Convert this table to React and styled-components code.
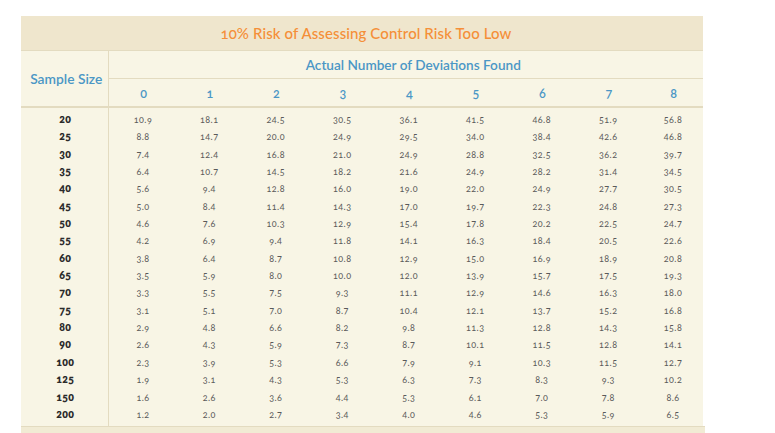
import React from "react";
import styled, { createGlobalStyle } from "styled-components";

const GlobalStyle = createGlobalStyle`
  body {
    margin: 0;
    background: #ffffff;
    font-family: Lato, "Open Sans", sans-serif;
  }
`;

const Page = styled.div`
  padding: 16px 0 0 21px;
  height: 433px;
  box-sizing: border-box;
  overflow: hidden;
`;

const Table = styled.table`
  width: 682px;
  table-layout: fixed;
  border-collapse: collapse;
  background: #f8f5e5;
  font-variant-numeric: oldstyle-nums;
`;

const Title = styled.th`
  height: 34px;
  padding: 0 0 0 8px;
  background: #efe6cd;
  border-bottom: 1px solid #e3dbc0;
  color: #f58f38;
  font-size: 15px;
  font-weight: 500;
  letter-spacing: 0.1px;
  text-align: center;
`;

const SampleHead = styled.th`
  padding: 0 0 0 4px;
  border-right: 1px solid #e3dbc0;
  border-bottom: 2px solid #e3dbc0;
  color: #4b97c5;
  font-size: 13.8px;
  font-weight: 600;
  text-align: center;
`;

const GroupHead = styled.th`
  height: 27px;
  padding: 0 0 0 15px;
  border-bottom: 1px solid #e3dbc0;
  color: #4b97c5;
  font-size: 13.6px;
  font-weight: 600;
  text-align: center;
`;

const DigitHead = styled.th`
  height: 25px;
  padding: 2px 0 0 4px;
  border-bottom: 2px solid #e3dbc0;
  color: #4b97c5;
  font-size: 12.5px;
  font-weight: 600;
  text-align: center;
`;

const Row = styled.tr`
  & > td {
    padding-top: ${({ $first }) => ($first ? "3px" : "0")};
    padding-bottom: ${({ $last }) => ($last ? "3px" : "0")};
  }
`;

const SizeCell = styled.td`
  border-right: 1px solid #e3dbc0;
  line-height: 17.35px;
  color: #2b2b2b;
  font-size: 10.5px;
  font-weight: 800;
  letter-spacing: 0.4px;
  text-align: center;
  padding-left: 3px;
`;

const ValueCell = styled.td`
  line-height: 17.35px;
  padding-left: 4px;
  color: #5a5a5a;
  font-size: 9px;
  letter-spacing: 0.4px;
  text-align: center;
`;

const FooterBand = styled.div`
  width: 684px;
  height: 8px;
  background: #f1ebd4;
  border-top: 1px solid #e3dbc0;
`;

const rows = [
  ["20", "10.9", "18.1", "24.5", "30.5", "36.1", "41.5", "46.8", "51.9", "56.8"],
  ["25", "8.8", "14.7", "20.0", "24.9", "29.5", "34.0", "38.4", "42.6", "46.8"],
  ["30", "7.4", "12.4", "16.8", "21.0", "24.9", "28.8", "32.5", "36.2", "39.7"],
  ["35", "6.4", "10.7", "14.5", "18.2", "21.6", "24.9", "28.2", "31.4", "34.5"],
  ["40", "5.6", "9.4", "12.8", "16.0", "19.0", "22.0", "24.9", "27.7", "30.5"],
  ["45", "5.0", "8.4", "11.4", "14.3", "17.0", "19.7", "22.3", "24.8", "27.3"],
  ["50", "4.6", "7.6", "10.3", "12.9", "15.4", "17.8", "20.2", "22.5", "24.7"],
  ["55", "4.2", "6.9", "9.4", "11.8", "14.1", "16.3", "18.4", "20.5", "22.6"],
  ["60", "3.8", "6.4", "8.7", "10.8", "12.9", "15.0", "16.9", "18.9", "20.8"],
  ["65", "3.5", "5.9", "8.0", "10.0", "12.0", "13.9", "15.7", "17.5", "19.3"],
  ["70", "3.3", "5.5", "7.5", "9.3", "11.1", "12.9", "14.6", "16.3", "18.0"],
  ["75", "3.1", "5.1", "7.0", "8.7", "10.4", "12.1", "13.7", "15.2", "16.8"],
  ["80", "2.9", "4.8", "6.6", "8.2", "9.8", "11.3", "12.8", "14.3", "15.8"],
  ["90", "2.6", "4.3", "5.9", "7.3", "8.7", "10.1", "11.5", "12.8", "14.1"],
  ["100", "2.3", "3.9", "5.3", "6.6", "7.9", "9.1", "10.3", "11.5", "12.7"],
  ["125", "1.9", "3.1", "4.3", "5.3", "6.3", "7.3", "8.3", "9.3", "10.2"],
  ["150", "1.6", "2.6", "3.6", "4.4", "5.3", "6.1", "7.0", "7.8", "8.6"],
  ["200", "1.2", "2.0", "2.7", "3.4", "4.0", "4.6", "5.3", "5.9", "6.5"],
];

const deviations = ["0", "1", "2", "3", "4", "5", "6", "7", "8"];

const App = () => {
  return (
    <Page>
      <GlobalStyle />
      <Table>
        <colgroup>
          <col style={{ width: 87 }} />
          {deviations.slice(0, 8).map((d) => (
            <col key={d} style={{ width: 66.5 }} />
          ))}
          <col style={{ width: 63 }} />
        </colgroup>
        <thead>
          <tr>
            <Title colSpan={10}>10% Risk of Assessing Control Risk Too Low</Title>
          </tr>
          <tr>
            <SampleHead rowSpan={2}>Sample Size</SampleHead>
            <GroupHead colSpan={9}>Actual Number of Deviations Found</GroupHead>
          </tr>
          <tr>
            {deviations.map((d) => (
              <DigitHead key={d}>{d}</DigitHead>
            ))}
          </tr>
        </thead>
        <tbody>
          {rows.map((r, i) => (
            <Row key={r[0]} $first={i === 0} $last={i === rows.length - 1}>
              <SizeCell>{r[0]}</SizeCell>
              {r.slice(1).map((v, j) => (
                <ValueCell key={j}>{v}</ValueCell>
              ))}
            </Row>
          ))}
        </tbody>
      </Table>
      <FooterBand />
    </Page>
  );
};

export default App;
